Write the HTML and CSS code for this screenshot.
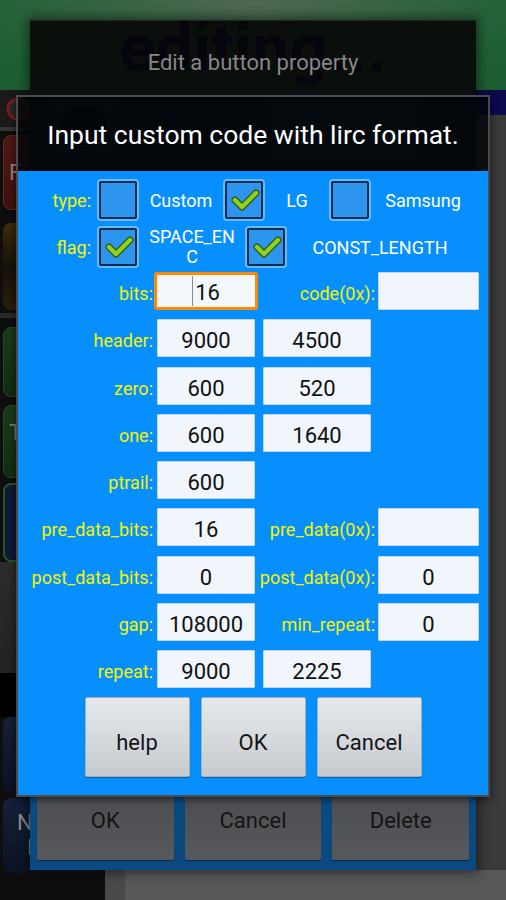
FILE: index.html
```html
<!DOCTYPE html>
<html>
<head>
<meta charset="utf-8">
<title>Input custom code</title>
<link rel="stylesheet" href="styles.css">
</head>
<body>
<div class="screen">
  <div class="app">
    <div class="app-top"></div>
    <div class="app-main">
      <aside class="side">
        <div class="side-bar">
          <svg class="logo" viewBox="0 0 24 24" width="24" height="24"><circle cx="12" cy="12" r="10" fill="#2a2a2a" stroke="#7a1c1c" stroke-width="3"/></svg>
        </div>
        <div class="side-line"></div>
        <div class="key key-red">F</div>
        <div class="key key-orange"></div>
        <div class="side-sep"></div>
        <div class="key key-green"></div>
        <div class="key key-green2">T</div>
        <div class="key key-navy"></div>
        <div class="side-gray"></div>
        <div class="side-black"></div>
        <div class="key key-dark"></div>
        <div class="key key-dark2"><span class="kl1">N</span><span class="kl2">I</span></div>
      </aside>
      <div class="content">
        <div class="content-nav"></div>
        <div class="content-body"></div>
        <div class="content-foot"></div>
      </div>
    </div>
  </div>

  <section class="back">
    <div class="back-title">
      <span class="ghost">editing...</span>
      <span class="back-sub">Edit a button property</span>
    </div>
    <div class="back-body">
      <div class="bb-row">
        <div class="bb-logo"><span class="bb-circle"></span></div>
        <div class="bb-label"></div>
        <div class="bb-input"></div>
      </div>
    </div>
    <div class="back-foot">
      <div class="back-btn">OK</div>
      <div class="back-btn">Cancel</div>
      <div class="back-btn">Delete</div>
    </div>
  </section>

  <section class="front">
    <div class="front-title">Input custom code with lirc format.</div>
    <div class="front-body">
      <div class="cb-row">
        <div class="lab-sm">type:</div>
        <svg class="cb" viewBox="0 0 42 42"><rect x="1" y="1" width="40" height="40" rx="3" fill="#2d95ee" stroke="#67b9f7" stroke-width="2"/><rect x="3" y="3" width="36" height="36" rx="1" fill="#2d95ee" stroke="#0f2d4f" stroke-width="2"/></svg>
        <div class="opt w84">Custom</div>
        <svg class="cb" viewBox="0 0 42 42"><rect x="1" y="1" width="40" height="40" rx="3" fill="#2d95ee" stroke="#67b9f7" stroke-width="2"/><rect x="3" y="3" width="36" height="36" rx="1" fill="#2d95ee" stroke="#0f2d4f" stroke-width="2"/><path d="M12 21 L19 28 L33 14" fill="none" stroke="#2e5a0e" stroke-width="7" stroke-linecap="round" stroke-linejoin="round"/><path d="M12 21 L19 28 L33 14" fill="none" stroke="#8fd322" stroke-width="4.4" stroke-linecap="round" stroke-linejoin="round"/></svg>
        <div class="opt w64">LG</div>
        <svg class="cb" viewBox="0 0 42 42"><rect x="1" y="1" width="40" height="40" rx="3" fill="#2d95ee" stroke="#67b9f7" stroke-width="2"/><rect x="3" y="3" width="36" height="36" rx="1" fill="#2d95ee" stroke="#0f2d4f" stroke-width="2"/></svg>
        <div class="opt w104">Samsung</div>
      </div>
      <div class="cb-row flag-row">
        <div class="lab-sm">flag:</div>
        <svg class="cb" viewBox="0 0 42 42"><rect x="1" y="1" width="40" height="40" rx="3" fill="#2d95ee" stroke="#67b9f7" stroke-width="2"/><rect x="3" y="3" width="36" height="36" rx="1" fill="#2d95ee" stroke="#0f2d4f" stroke-width="2"/><path d="M12 21 L19 28 L33 14" fill="none" stroke="#2e5a0e" stroke-width="7" stroke-linecap="round" stroke-linejoin="round"/><path d="M12 21 L19 28 L33 14" fill="none" stroke="#8fd322" stroke-width="4.4" stroke-linecap="round" stroke-linejoin="round"/></svg>
        <div class="opt w106"><span class="wrap">SPACE_ENC</span></div>
        <svg class="cb" viewBox="0 0 42 42"><rect x="1" y="1" width="40" height="40" rx="3" fill="#2d95ee" stroke="#67b9f7" stroke-width="2"/><rect x="3" y="3" width="36" height="36" rx="1" fill="#2d95ee" stroke="#0f2d4f" stroke-width="2"/><path d="M12 21 L19 28 L33 14" fill="none" stroke="#2e5a0e" stroke-width="7" stroke-linecap="round" stroke-linejoin="round"/><path d="M12 21 L19 28 L33 14" fill="none" stroke="#8fd322" stroke-width="4.4" stroke-linecap="round" stroke-linejoin="round"/></svg>
        <div class="opt w186">CONST_LENGTH</div>
      </div>

      <div class="form">
        <div class="lbl">bits:</div>
        <div class="field focus"><span class="caret"></span>16</div>
        <div class="lbl2">code(0x):</div>
        <div class="field"></div>

        <div class="lbl">header:</div>
        <div class="field">9000</div>
        <div class="field wide">4500</div>

        <div class="lbl">zero:</div>
        <div class="field">600</div>
        <div class="field wide">520</div>

        <div class="lbl">one:</div>
        <div class="field">600</div>
        <div class="field wide">1640</div>

        <div class="lbl">ptrail:</div>
        <div class="field">600</div>

        <div class="lbl">pre_data_bits:</div>
        <div class="field">16</div>
        <div class="lbl2">pre_data(0x):</div>
        <div class="field"></div>

        <div class="lbl">post_data_bits:</div>
        <div class="field">0</div>
        <div class="lbl2">post_data(0x):</div>
        <div class="field">0</div>

        <div class="lbl">gap:</div>
        <div class="field">108000</div>
        <div class="lbl2">min_repeat:</div>
        <div class="field">0</div>

        <div class="lbl">repeat:</div>
        <div class="field">9000</div>
        <div class="field wide">2225</div>
      </div>

      <div class="actions">
        <div class="btn">help</div>
        <div class="btn">OK</div>
        <div class="btn">Cancel</div>
      </div>
    </div>
  </section>
</div>
</body>
</html>
```

FILE: styles.css
```css
html, body {
  margin: 0;
  padding: 0;
  background: #000;
}
body {
  font-family: Roboto, "Noto Sans", "Liberation Sans", sans-serif;
}
.screen {
  position: relative;
  width: 506px;
  height: 900px;
  overflow: hidden;
}

/* ---------- background app (dimmed) ---------- */
.app {
  display: flex;
  flex-direction: column;
  height: 900px;
}
.app-top {
  height: 90px;
  flex: none;
  background: radial-gradient(ellipse 70% 120% at 50% 0%, #4f6752 0%, #336442 45%, #1f6033 80%, #1c5e31 100%);
}
.app-main {
  flex: 1;
  display: flex;
  min-height: 0;
}
.side {
  width: 105px;
  flex: none;
  background: #0e0e0e;
  display: flex;
  flex-direction: column;
}
.side-bar {
  height: 37px;
  flex: none;
  background: #1a1a1a;
  display: flex;
  align-items: center;
  padding-left: 6px;
}
.side-line {
  height: 4px;
  flex: none;
  background: #363636;
}
.key {
  flex: none;
  margin-left: 3px;
  width: 96px;
  box-sizing: border-box;
  border-radius: 8px;
  font-size: 22px;
  color: #8a8a8a;
  padding-left: 5px;
}
.key-red {
  margin-top: 4px;
  height: 75px;
  background: linear-gradient(#521818, #3e1010);
  border: 1px solid #642828;
  display: flex;
  align-items: center;
  color: #968484;
}
.key-orange {
  margin-top: 13px;
  height: 87px;
  background: linear-gradient(#3f2c0e, #171109 50%, #2a1f0d);
}
.side-sep {
  flex: none;
  height: 5px;
  margin-top: 3px;
  background: #2a2a2a;
}
.key-green {
  margin-top: 9px;
  height: 70px;
  background: linear-gradient(#1a3c1a, #122c12);
  border: 1px solid #214a21;
}
.key-green2 {
  margin-top: 8px;
  height: 73px;
  background: linear-gradient(#1a3c1a, #122c12);
  border: 1px solid #214a21;
  padding-top: 16px;
  line-height: 22px;
  color: #748474;
}
.key-navy {
  margin-top: 5px;
  height: 79px;
  background: #111838;
  border: 2px solid #205a27;
}
.side-gray {
  flex: none;
  height: 111px;
  background: linear-gradient(#2c2c2c, #222);
}
.side-black {
  flex: none;
  height: 44px;
  background: #000;
}
.key-dark {
  height: 76px;
  background: linear-gradient(#14213a, #0b1222);
}
.key-dark2 {
  margin-top: 5px;
  height: 75px;
  background: linear-gradient(#14213a, #0b1222);
  display: flex;
  flex-direction: column;
  padding-left: 14px;
  padding-top: 12px;
  line-height: 25px;
}
.kl2 {
  padding-left: 10px;
}
.content {
  flex: 1;
  display: flex;
  flex-direction: column;
}
.content-nav {
  height: 25px;
  flex: none;
  background: #0a0a4c;
}
.content-body {
  flex: 1;
  background: linear-gradient(90deg, #303030, #3a3a3a);
}
.content-foot {
  height: 30px;
  flex: none;
  background: #575757;
  border-left: 20px solid #494949;
}

/* ---------- back dialog ---------- */
.back {
  position: absolute;
  left: 30px;
  top: 20px;
  width: 446px;
  height: 850px;
  display: flex;
  flex-direction: column;
  box-shadow: 0 0 10px 3px rgba(0, 0, 0, 0.45);
}
.back-title {
  height: 70px;
  flex: none;
  box-sizing: border-box;
  background: #0b0f0b;
  border-top: 1px solid #1e241e;
  display: grid;
  grid-template-rows: 69px;
  grid-template-columns: 100%;
  place-items: center;
  overflow: hidden;
}
.back-title > span {
  grid-area: 1 / 1;
}
.ghost {
  font-size: 66px;
  font-weight: bold;
  line-height: 70px;
  color: #05050d;
  letter-spacing: 0.5px;
  margin-bottom: 14px;
  white-space: nowrap;
}
.back-sub {
  font-size: 22px;
  color: #878787;
  margin-top: 14px;
}
.back-body {
  flex: 1;
  background: #0a1115;
}
.bb-row {
  display: flex;
  align-items: flex-start;
  margin-top: 9px;
  padding-left: 22px;
}
.bb-logo {
  width: 64px;
  height: 52px;
  background: #141d22;
  display: flex;
  align-items: center;
  justify-content: center;
}
.bb-circle {
  width: 46px;
  height: 40px;
  border-radius: 50%;
  background: #020405;
}
.bb-label {
  margin-left: 62px;
  width: 62px;
  height: 56px;
}
.bb-input {
  margin-left: 28px;
  width: 150px;
  height: 60px;
  background: #121a1e;
}
.back-foot {
  flex: none;
  background: #0b4a80;
  padding: 7px 7px 10px;
  display: flex;
  gap: 11px;
}
.back-btn {
  flex: 1;
  height: 80px;
  border-radius: 2px;
  background: linear-gradient(#4a4c4f, #56585b);
  box-shadow: 0 1px 1px rgba(0, 0, 0, 0.5);
  color: #141414;
  font-size: 22px;
  display: flex;
  align-items: center;
  justify-content: center;
}

/* ---------- front dialog ---------- */
.front {
  position: absolute;
  left: 16px;
  top: 95px;
  width: 474px;
  height: 702px;
  box-sizing: border-box;
  border: 2px solid #4b4b4b;
  display: flex;
  flex-direction: column;
  box-shadow: 0 2px 8px rgba(0, 0, 0, 0.6);
}
.front-title {
  height: 74px;
  flex: none;
  background: rgba(1, 5, 9, 0.8);
  color: #fff;
  font-size: 26.5px;
  display: flex;
  align-items: center;
  justify-content: center;
}
.front-body {
  flex: 1;
  background: #0790fd;
  padding-top: 8px;
}
.cb-row {
  display: flex;
  align-items: center;
  height: 42px;
}
.flag-row {
  margin-top: 5px;
}
.lab-sm {
  width: 79px;
  box-sizing: border-box;
  padding-right: 6px;
  text-align: right;
  color: #f4f400;
  font-size: 18px;
}
.cb {
  width: 42px;
  height: 42px;
  flex: none;
  display: block;
}
.opt {
  color: #fff;
  font-size: 18px;
  text-align: center;
  flex: none;
}
.w84 { width: 84px; }
.w64 { width: 64px; }
.w104 { width: 104px; }
.w106 { width: 106px; }
.w186 { width: 186px; }
.wrap {
  display: block;
  width: 90px;
  margin: 0 auto;
  word-break: break-all;
  line-height: 20px;
  font-size: 18px;
}

.form {
  margin-top: 4px;
  display: grid;
  grid-template-columns: 139px 98px 123px 101px;
  grid-auto-rows: 38px;
  row-gap: 9.25px;
}
.lbl, .lbl2 {
  color: #f4f400;
  font-size: 18px;
  line-height: 44px;
  text-align: right;
  white-space: nowrap;
}
.lbl {
  grid-column: 1;
  padding-right: 4px;
}
.lbl2 {
  padding-right: 3px;
}
.field {
  box-sizing: border-box;
  background: #f0f6fc;
  border: 1px solid #c6d4e2;
  border-radius: 1px;
  color: #111;
  font-size: 22px;
  padding-top: 5px;
  display: flex;
  align-items: center;
  justify-content: center;
}
.field.wide {
  margin-left: 8px;
  width: 108px;
}
.field.focus {
  margin: 0 -3px;
  border: 3px solid #ff8a00;
  border-radius: 3px;
  background: #f3f8fd;
  padding-top: 3px;
}
.caret {
  width: 1px;
  height: 30px;
  background: #8a8a8a;
  margin-right: 2px;
  margin-top: -3px;
}

.actions {
  margin-top: 9px;
  display: flex;
  justify-content: center;
  gap: 11px;
}
.btn {
  width: 105px;
  height: 80px;
  box-sizing: border-box;
  border: 1px solid #a9afb6;
  border-radius: 2px;
  background: linear-gradient(#e5e8ec, #c7cbd0);
  box-shadow: 0 1px 1px rgba(0, 0, 0, 0.35);
  color: #141414;
  font-size: 22px;
  padding-top: 10px;
  display: flex;
  align-items: center;
  justify-content: center;
}
```
